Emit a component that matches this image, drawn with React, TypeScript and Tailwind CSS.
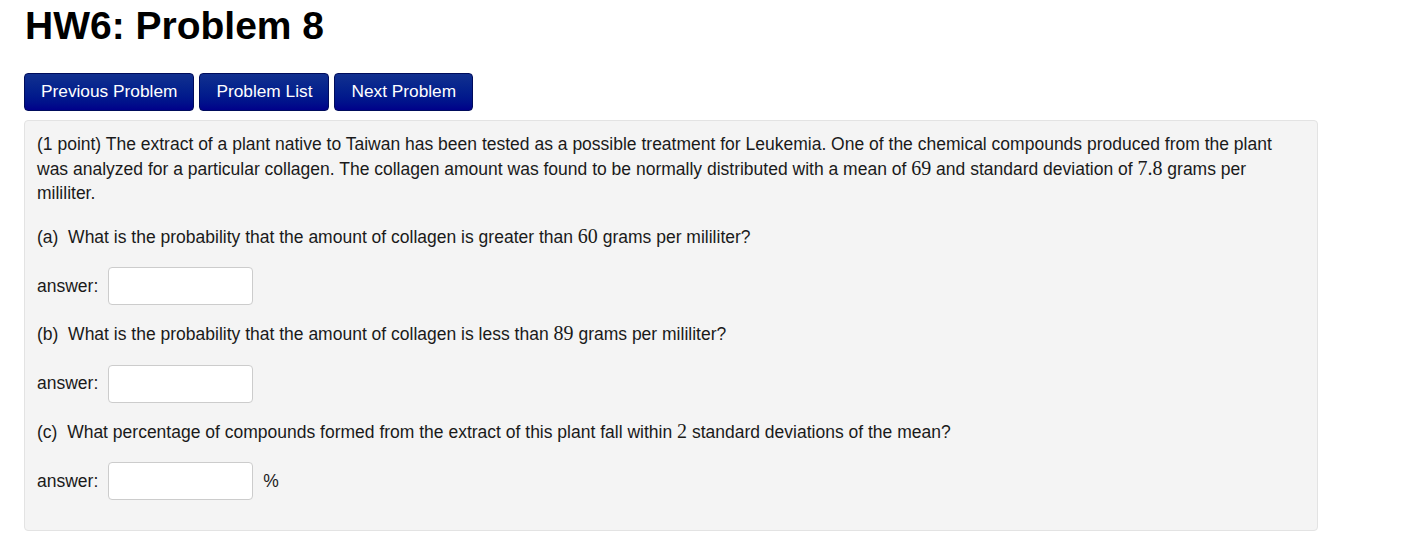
import React from 'react';

const M = ({ children }: { children: React.ReactNode }) => (
  <span className="text-[20px] leading-none font-['Liberation_Serif',serif]">{children}</span>
);

function Answer({ suffix }: { suffix?: string }) {
  return (
    <div className="flex items-center mt-[18px] h-[38px]">
      <span>answer:</span>
      <input className="ml-[10px] w-[145px] h-[38px] bg-white border border-[#cccccc] rounded-[4px] px-2" />
      {suffix && <span className="ml-[10px]">{suffix}</span>}
    </div>
  );
}

export default function App() {
  const btn =
    'h-[38px] px-[16px] rounded-[4px] text-white text-[17.3px] bg-gradient-to-b from-[#12308f] to-[#00008a] border border-[#000c5c]';
  return (
    <div className="font-['Liberation_Sans',Arial,sans-serif] text-[#1a1a1a] pl-[24px] w-[1318px] pb-4">
      <h1 className="text-[39px] font-bold text-black leading-none pt-[6px] pl-[1px]">HW6: Problem 8</h1>
      <div className="flex gap-[5px] mt-[28px]">
        <button className={btn}>Previous Problem</button>
        <button className={btn}>Problem List</button>
        <button className={btn}>Next Problem</button>
      </div>
      <div className="mt-[9px] bg-[#f4f4f4] border border-[#e3e3e3] rounded-[4px] pl-[12px] pr-[26px] pt-[11px] pb-[30px] text-[17.5px] leading-[24.5px]">
        <p>
          (1 point) The extract of a plant native to Taiwan has been tested as a possible treatment for Leukemia. One of
          the chemical compounds produced from the plant was analyzed for a particular collagen. The collagen amount was
          found to be normally distributed with a mean of <M>69</M> and standard deviation of <M>7.8</M> grams per
          mililiter.
        </p>
        <p className="mt-[19px]">
          (a)&nbsp; What is the probability that the amount of collagen is greater than <M>60</M> grams per mililiter?
        </p>
        <Answer />
        <p className="mt-[17px]">
          (b)&nbsp; What is the probability that the amount of collagen is less than <M>89</M> grams per mililiter?
        </p>
        <Answer />
        <p className="mt-[17px]">
          (c)&nbsp; What percentage of compounds formed from the extract of this plant fall within <M>2</M> standard
          deviations of the mean?
        </p>
        <Answer suffix="%" />
      </div>
    </div>
  );
}
